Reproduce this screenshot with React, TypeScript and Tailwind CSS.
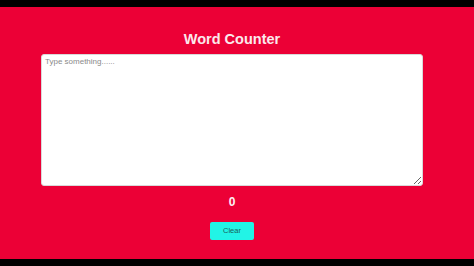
export default function App() {
  return (
    <div className="flex h-[266px] w-[474px] flex-col bg-black font-['Liberation_Sans',Arial,sans-serif]">
      <div className="h-[7px] shrink-0 bg-black" />
      <main className="flex flex-1 flex-col items-center bg-[#ec0036] pr-[10px] pt-[22px]">
        <h1 className="text-[14.5px] font-bold leading-[20px] text-[#fbe9ec]">Word Counter</h1>
        <textarea
          placeholder="Type something......"
          className="mt-[5px] h-[132px] w-[382px] shrink-0 rounded-[3px] border border-[#d9d9d9] bg-white px-[3px] py-[2px] text-[8px] leading-[10px] text-gray-800 placeholder:text-[#8a8a8a] outline-none"
        />
        <div className="mt-[9px] text-[12px] font-bold leading-[14px] text-[#fdf1f3]">0</div>
        <button className="mt-[13px] h-[18px] w-[44px] rounded-[2px] bg-[#22f4e6] text-[7.5px] text-[#1b5f5c]">
          Clear
        </button>
      </main>
      <div className="h-[7px] shrink-0 bg-black" />
    </div>
  );
}
